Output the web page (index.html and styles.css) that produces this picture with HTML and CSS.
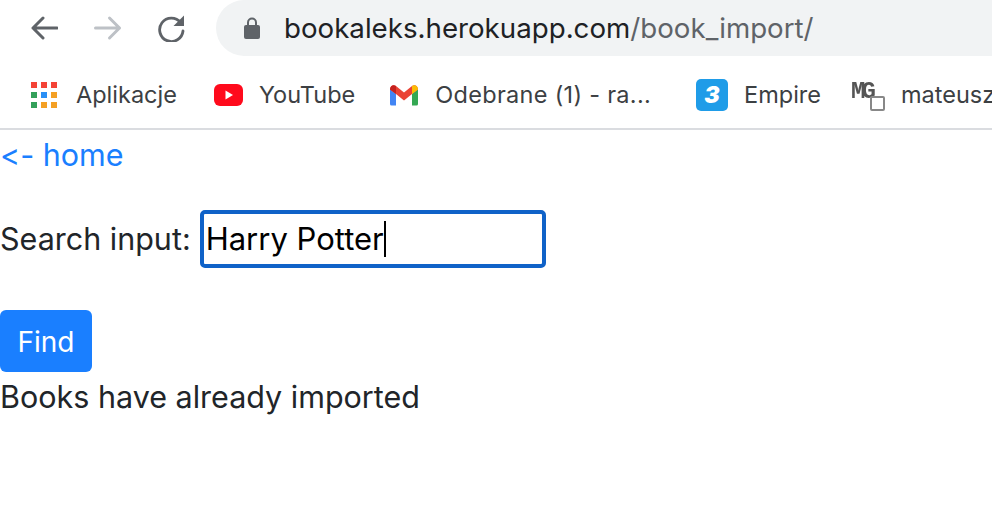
FILE: index.html
```html
<!DOCTYPE html>
<html lang="en">
<head>
    <meta charset="UTF-8">
    <meta name="viewport" content="width=device-width, initial-scale=1.0">
    <title>Book import</title>
    <link rel="stylesheet" href="styles.css">
</head>
<body>
    <div class="toolbar">
        <svg class="nav-icon" viewBox="0 0 28 28" width="28" height="28">
            <path d="M27 14H3M13 4L3 14l10 10" fill="none" stroke="#5f6368" stroke-width="3" stroke-linecap="round" stroke-linejoin="round"/>
        </svg>
        <svg class="nav-icon" viewBox="0 0 28 28" width="28" height="28">
            <path d="M1.500 14h24M15.500 4l10 10-10 10" fill="none" stroke="#bdc1c6" stroke-width="3" stroke-linecap="round" stroke-linejoin="round"/>
        </svg>
        <svg class="nav-icon" viewBox="0 0 28 28" width="28" height="28">
            <path d="M22.6 8.6A11.7 11.7 0 1 0 25 17" fill="none" stroke="#5f6368" stroke-width="2.8" stroke-linecap="round"/>
            <path d="M26 1.5V12H15.5z" fill="#5f6368"/>
        </svg>
        <div class="url-bar">
            <svg class="lock" viewBox="0 0 16 22" width="16" height="22">
                <path d="M4 9V5.500a4 4 0 0 1 8 0V9" fill="none" stroke="#5f6368" stroke-width="2"/>
                <rect x="0" y="8" width="16" height="14" rx="2" fill="#5f6368"/>
            </svg>
            <span class="host">bookaleks.herokuapp.com</span><span class="path">/book_import/</span>
        </div>
    </div>

    <div class="bookmarks">
        <div class="bookmark apps">
            <div class="apps-grid">
                <i class="red"></i><i class="red"></i><i class="red"></i>
                <i class="green"></i><i class="blue"></i><i class="orange"></i>
                <i class="green"></i><i class="orange"></i><i class="orange"></i>
            </div>
            <span>Aplikacje</span>
        </div>
        <div class="bookmark youtube">
            <svg viewBox="0 0 30 22" width="30" height="22">
                <rect width="29" height="22" rx="6" fill="#ff0a1c"/>
                <path d="M11.500 6.500v9l7.500-4.500z" fill="#fff"/>
            </svg>
            <span>YouTube</span>
        </div>
        <div class="bookmark gmail">
            <svg viewBox="1 0 30 22" width="30" height="22">
                <path d="M1 5v15a1.500 1.500 0 0 0 1.500 1.500H7V10z" fill="#4285f4"/>
                <path d="M23 10v11.500h4.500A1.500 1.500 0 0 0 29 20V5z" fill="#34a853"/>
                <path d="M1 5.500C1 1 5 .3 7 2l8 6.500L23 2c2-1.700 6-1 6 3.500L23 10l-8 6.500L7 10z" fill="#ea4335"/>
                <path d="M1 5.500C1 1 5 .3 7 2v8z" fill="#c5221f"/>
                <path d="M29 5.500C29 1 25 .3 23 2v8z" fill="#fbbc04"/>
            </svg>
            <span>Odebrane (1) - ra...</span>
        </div>
        <div class="bookmark empire">
            <div class="empire-icon">3</div>
            <span>Empire</span>
        </div>
        <div class="bookmark mg">
            <div class="mg-icon"><b>MG</b><i></i></div>
            <span>mateusz</span>
        </div>
    </div>

    <div class="content">
        <a class="home-link" href="#">&lt;- home</a>
        <div class="search-row">
            <label>Search input:</label>
            <div class="search-box">Harry Potter<span class="caret"></span></div>
        </div>
        <button class="find-btn">Find</button>
        <p class="message">Books have already imported</p>
    </div>
</body>
</html>
```

FILE: styles.css
```css
* {
    margin: 0;
    padding: 0;
    box-sizing: border-box;
}

body {
    width: 992px;
    height: 530px;
    overflow: hidden;
    font-family: 'Inter', 'Liberation Sans', sans-serif;
    font-variant-ligatures: none;
    font-feature-settings: "calt" 0;
    background-color: #ffffff;
    color: #212529;
}

.toolbar {
    display: flex;
    align-items: center;
    height: 56px;
    padding-left: 30px;
}

.nav-icon {
    margin-right: 36px;
    flex-shrink: 0;
}

.url-bar {
    display: flex;
    align-items: center;
    flex: 1;
    height: 56px;
    margin-left: -6px;
    padding-left: 28px;
    background-color: #f1f3f4;
    border-radius: 28px 0 0 28px;
    font-size: 27.7px;
    white-space: nowrap;
}

.lock {
    margin-right: 24px;
}

.host {
    color: #202124;
}

.path {
    color: #5f6368;
}

.bookmarks {
    display: flex;
    align-items: center;
    height: 74px;
    padding-top: 5px;
    padding-left: 31px;
    border-bottom: 2px solid #dadce0;
    overflow: hidden;
    white-space: nowrap;
    font-size: 23.5px;
    color: #3c4043;
}

.bookmark {
    display: flex;
    align-items: center;
    gap: 15px;
    margin-right: 36px;
    flex-shrink: 0;
}

.apps {
    gap: 19px;
    margin-right: 37px;
}

.youtube {
    margin-right: 35px;
}

.gmail {
    margin-right: 45px;
    letter-spacing: .3px;
}

.empire {
    gap: 16px;
    margin-right: 32px;
}

.mg {
    gap: 16px;
}

.apps-grid {
    display: grid;
    grid-template-columns: repeat(3, 6px);
    grid-auto-rows: 6px;
    gap: 4px;
}

.red { background-color: #f44336; }
.green { background-color: #34a05a; }
.blue { background-color: #2b8ff5; }
.orange { background-color: #f4a024; }

.empire-icon {
    width: 32px;
    height: 32px;
    background-color: #1f9ce8;
    border-radius: 5px;
    color: #fff;
    font-weight: 900;
    font-style: italic;
    font-size: 23px;
    line-height: 32px;
    text-align: center;
}

.mg-icon {
    position: relative;
    width: 32px;
    height: 32px;
    font-family: 'Liberation Mono', monospace;
    font-size: 24px;
    line-height: 26px;
    letter-spacing: -4px;
    color: #555;
}

.mg-icon b {
    display: block;
    margin-left: -2px;
    filter: blur(.5px);
}

.mg-icon i {
    position: absolute;
    right: 0;
    bottom: 0;
    width: 15px;
    height: 15px;
    background-color: #fff;
    border: 2px solid #888;
    border-radius: 2px;
}

.content {
    font-size: 30.5px;
    line-height: 48px;
}

.home-link {
    display: block;
    padding-top: 1px;
    color: #1a7fff;
    text-decoration: none;
}

.search-row {
    display: flex;
    align-items: center;
    gap: 9px;
    margin-top: 31px;
}

.search-box {
    display: flex;
    align-items: center;
    width: 346px;
    height: 58px;
    padding-left: 2px;
    border: 4px solid #0f62c8;
    border-radius: 5px;
    color: #000;
    font-size: 31px;
}

.caret {
    width: 2px;
    height: 36px;
    background-color: #000;
}

.find-btn {
    display: block;
    width: 92px;
    height: 62px;
    margin-top: 42px;
    padding-top: 2px;
    border: none;
    border-radius: 6px;
    background-color: #1a7fff;
    color: #fff;
    font-family: inherit;
    font-size: 28px;
}

.message {
    margin-top: 1px;
}
```
